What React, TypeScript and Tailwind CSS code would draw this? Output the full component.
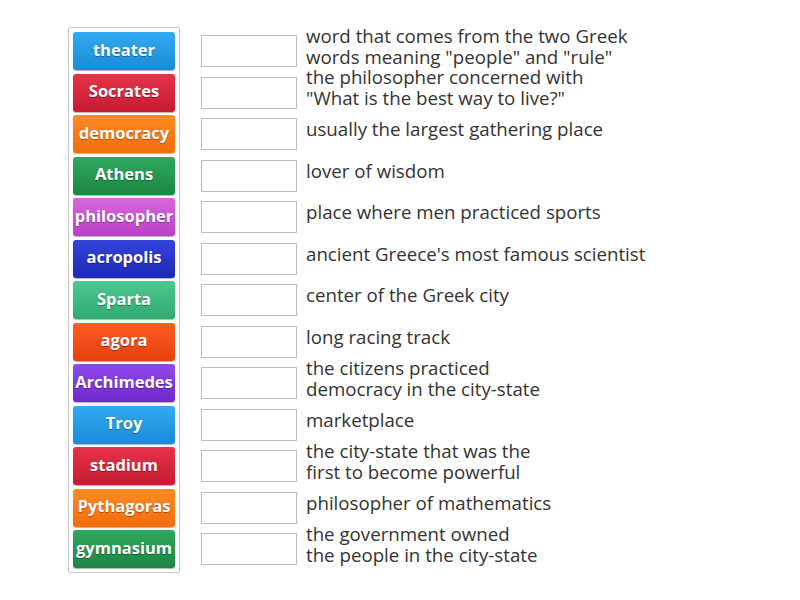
const tiles: { label: string; cls: string }[] = [
  { label: 'theater', cls: 'bg-gradient-to-b from-[#31aaf0] to-[#1a8bd8]' },
  { label: 'Socrates', cls: 'bg-gradient-to-b from-[#e8324a] to-[#c51a30]' },
  { label: 'democracy', cls: 'bg-gradient-to-b from-[#ff8c22] to-[#f06c0c]' },
  { label: 'Athens', cls: 'bg-gradient-to-b from-[#2fa85e] to-[#1c8644]' },
  { label: 'philosopher', cls: 'bg-gradient-to-b from-[#d766dc] to-[#bb3fc6]' },
  { label: 'acropolis', cls: 'bg-gradient-to-b from-[#3443dc] to-[#1d29b4]' },
  { label: 'Sparta', cls: 'bg-gradient-to-b from-[#4cc890] to-[#31aa72]' },
  { label: 'agora', cls: 'bg-gradient-to-b from-[#ff5c22] to-[#e6400c]' },
  { label: 'Archimedes', cls: 'bg-gradient-to-b from-[#9048ec] to-[#6e28cc]' },
  { label: 'Troy', cls: 'bg-gradient-to-b from-[#31aaf0] to-[#1a8bd8]' },
  { label: 'stadium', cls: 'bg-gradient-to-b from-[#e8324a] to-[#c51a30]' },
  { label: 'Pythagoras', cls: 'bg-gradient-to-b from-[#ff8c22] to-[#f06c0c]' },
  { label: 'gymnasium', cls: 'bg-gradient-to-b from-[#2fa85e] to-[#1c8644]' },
];

const clues: string[][] = [
  ['word that comes from the two Greek', 'words meaning "people" and "rule"'],
  ['the philosopher concerned with', '"What is the best way to live?"'],
  ['usually the largest gathering place'],
  ['lover of wisdom'],
  ['place where men practiced sports'],
  ["ancient Greece's most famous scientist"],
  ['center of the Greek city'],
  ['long racing track'],
  ['the citizens practiced', 'democracy in the city-state'],
  ['marketplace'],
  ['the city-state that was the', 'first to become powerful'],
  ['philosopher of mathematics'],
  ['the government owned', 'the people in the city-state'],
];

export default function App() {
  return (
    <div className="w-[800px] h-[600px] bg-white font-['Open_Sans',sans-serif] flex pl-[68px] pt-[27px] gap-[21px]">
      {/* word tiles */}
      <div className="border border-[#c8c8c8] rounded-[2px] p-[4px] self-start flex flex-col gap-[3.5px]">
        {tiles.map((t) => (
          <div
            key={t.label}
            className={`w-[102px] h-[38px] pb-[2px] rounded-[3px] flex items-center justify-center text-white font-bold text-[16.5px] [text-shadow:0_1px_1px_rgba(0,0,0,0.35)] shadow-[0_1px_1px_rgba(0,0,0,0.3)] ${t.cls}`}
          >
            {t.label}
          </div>
        ))}
      </div>

      {/* drop boxes and clues */}
      <div className="pt-[5px] flex flex-col gap-[3.5px]">
        {clues.map((lines, i) => (
          <div key={i} className="h-[38px] flex items-center gap-[9px]">
            <div className="w-[96px] h-[32px] border border-[#bdbdbd] bg-white shrink-0" />
            <div className="text-[18.7px] leading-[20.75px] text-[#333] whitespace-nowrap pb-[9px]">
              {lines.map((l) => (
                <div key={l}>{l}</div>
              ))}
            </div>
          </div>
        ))}
      </div>
    </div>
  );
}
